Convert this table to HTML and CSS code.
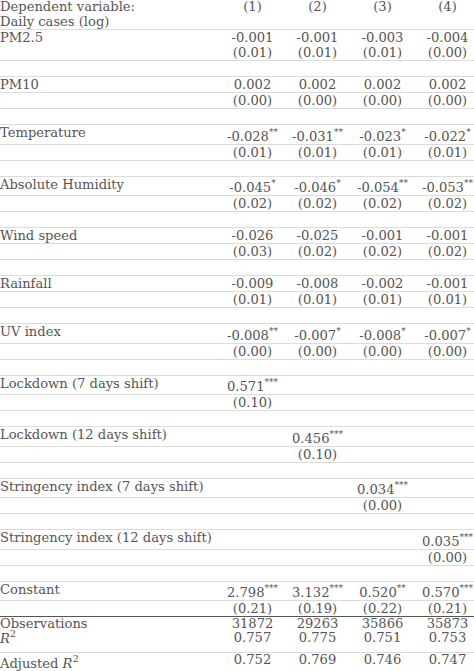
FILE: index.html
```html
<!DOCTYPE html>
<html>
<head>
<meta charset="utf-8">
<link rel="stylesheet" href="styles.css">
</head>
<body>
<table class="reg">
  <colgroup>
    <col class="c-label"><col class="c-val"><col class="c-val"><col class="c-val"><col class="c-val">
  </colgroup>
  <tr class="head">
    <td class="lab">Dependent variable:<br>Daily cases (log)</td>
    <td>(1)</td><td>(2)</td><td>(3)</td><td>(4)</td>
  </tr>

  <tr class="nob"><td class="lab">PM2.5</td><td>-0.001</td><td>-0.001</td><td>-0.003</td><td>-0.004</td></tr>
  <tr><td class="lab"></td><td>(0.01)</td><td>(0.01)</td><td>(0.01)</td><td>(0.00)</td></tr>
  <tr><td class="lab"></td><td></td><td></td><td></td><td></td></tr>

  <tr><td class="lab">PM10</td><td>0.002</td><td>0.002</td><td>0.002</td><td>0.002</td></tr>
  <tr><td class="lab"></td><td>(0.00)</td><td>(0.00)</td><td>(0.00)</td><td>(0.00)</td></tr>
  <tr><td class="lab"></td><td></td><td></td><td></td><td></td></tr>

  <tr class="star"><td class="lab">Temperature</td><td>-0.028<sup>**</sup></td><td>-0.031<sup>**</sup></td><td>-0.023<sup>*</sup></td><td>-0.022<sup>*</sup></td></tr>
  <tr><td class="lab"></td><td>(0.01)</td><td>(0.01)</td><td>(0.01)</td><td>(0.01)</td></tr>
  <tr><td class="lab"></td><td></td><td></td><td></td><td></td></tr>

  <tr class="star"><td class="lab">Absolute Humidity</td><td>-0.045<sup>*</sup></td><td>-0.046<sup>*</sup></td><td>-0.054<sup>**</sup></td><td>-0.053<sup>**</sup></td></tr>
  <tr><td class="lab"></td><td>(0.02)</td><td>(0.02)</td><td>(0.02)</td><td>(0.02)</td></tr>
  <tr><td class="lab"></td><td></td><td></td><td></td><td></td></tr>

  <tr><td class="lab">Wind speed</td><td>-0.026</td><td>-0.025</td><td>-0.001</td><td>-0.001</td></tr>
  <tr><td class="lab"></td><td>(0.03)</td><td>(0.02)</td><td>(0.02)</td><td>(0.02)</td></tr>
  <tr><td class="lab"></td><td></td><td></td><td></td><td></td></tr>

  <tr><td class="lab">Rainfall</td><td>-0.009</td><td>-0.008</td><td>-0.002</td><td>-0.001</td></tr>
  <tr><td class="lab"></td><td>(0.01)</td><td>(0.01)</td><td>(0.01)</td><td>(0.01)</td></tr>
  <tr><td class="lab"></td><td></td><td></td><td></td><td></td></tr>

  <tr class="star"><td class="lab">UV index</td><td>-0.008<sup>**</sup></td><td>-0.007<sup>*</sup></td><td>-0.008<sup>*</sup></td><td>-0.007<sup>*</sup></td></tr>
  <tr><td class="lab"></td><td>(0.00)</td><td>(0.00)</td><td>(0.00)</td><td>(0.00)</td></tr>
  <tr><td class="lab"></td><td></td><td></td><td></td><td></td></tr>

  <tr class="star"><td class="lab">Lockdown (7 days shift)</td><td>0.571<sup>***</sup></td><td></td><td></td><td></td></tr>
  <tr><td class="lab"></td><td>(0.10)</td><td></td><td></td><td></td></tr>
  <tr><td class="lab"></td><td></td><td></td><td></td><td></td></tr>

  <tr class="star"><td class="lab">Lockdown (12 days shift)</td><td></td><td>0.456<sup>***</sup></td><td></td><td></td></tr>
  <tr><td class="lab"></td><td></td><td>(0.10)</td><td></td><td></td></tr>
  <tr><td class="lab"></td><td></td><td></td><td></td><td></td></tr>

  <tr class="star"><td class="lab">Stringency index (7 days shift)</td><td></td><td></td><td>0.034<sup>***</sup></td><td></td></tr>
  <tr><td class="lab"></td><td></td><td></td><td>(0.00)</td><td></td></tr>
  <tr><td class="lab"></td><td></td><td></td><td></td><td></td></tr>

  <tr class="star"><td class="lab">Stringency index (12 days shift)</td><td></td><td></td><td></td><td>0.035<sup>***</sup></td></tr>
  <tr><td class="lab"></td><td></td><td></td><td></td><td>(0.00)</td></tr>
  <tr><td class="lab"></td><td></td><td></td><td></td><td></td></tr>

  <tr class="star"><td class="lab">Constant</td><td>2.798<sup>***</sup></td><td>3.132<sup>***</sup></td><td>0.520<sup>**</sup></td><td>0.570<sup>***</sup></td></tr>
  <tr class="rule"><td class="lab"></td><td>(0.21)</td><td>(0.19)</td><td>(0.22)</td><td>(0.21)</td></tr>

  <tr class="obs nob"><td class="lab">Observations</td><td>31872</td><td>29263</td><td>35866</td><td>35873</td></tr>
  <tr class="r2"><td class="lab"><i>R</i><sup class="exp">2</sup></td><td>0.757</td><td>0.775</td><td>0.751</td><td>0.753</td></tr>
  <tr class="adj nob"><td class="lab">Adjusted <i>R</i><sup class="exp">2</sup></td><td>0.752</td><td>0.769</td><td>0.746</td><td>0.747</td></tr>
</table>
</body>
</html>
```

FILE: styles.css
```css
html, body {
  margin: 0;
  padding: 0;
  overflow: hidden;
  background: #ffffff;
}

.reg {
  border-collapse: separate;
  border-spacing: 0;
  table-layout: fixed;
  width: 480px;
  font-family: "DejaVu Serif", "Liberation Serif", serif;
  font-size: 13.1px;
  color: #555555;
}

.c-label { width: 220px; }
.c-val { width: 65px; }

.reg td {
  padding: 0;
  height: 15px;
  line-height: 15px;
  white-space: nowrap;
  text-align: center;
  vertical-align: bottom;
  border-bottom: 1px solid #dcdcdc;
}

.reg td.lab {
  text-align: left;
  vertical-align: top;
}

.reg tr.nob td { border-bottom: none; }

.reg tr.head td {
  height: 29px;
  line-height: 14.5px;
  vertical-align: top;
}

.reg tr.star td { height: 18.5px; }

.reg sup {
  font-size: 9px;
  line-height: 0;
  vertical-align: 6px;
}

.reg tr.rule td { border-bottom: 1.5px solid #555555; }

.reg tr.obs td,
.reg tr.r2 td,
.reg tr.adj td {
  line-height: 13px;
  vertical-align: top;
}

.reg tr.obs td { height: 14px; }
.reg tr.r2 td { height: 20px; }
.reg tr.r2 td.lab { padding-top: 1px; }
.reg tr.adj td { height: 18px; }
.reg tr.adj td.lab { padding-top: 4px; }

.reg sup.exp {
  font-size: 10px;
  line-height: 0;
  vertical-align: 6px;
  font-style: normal;
}
```
